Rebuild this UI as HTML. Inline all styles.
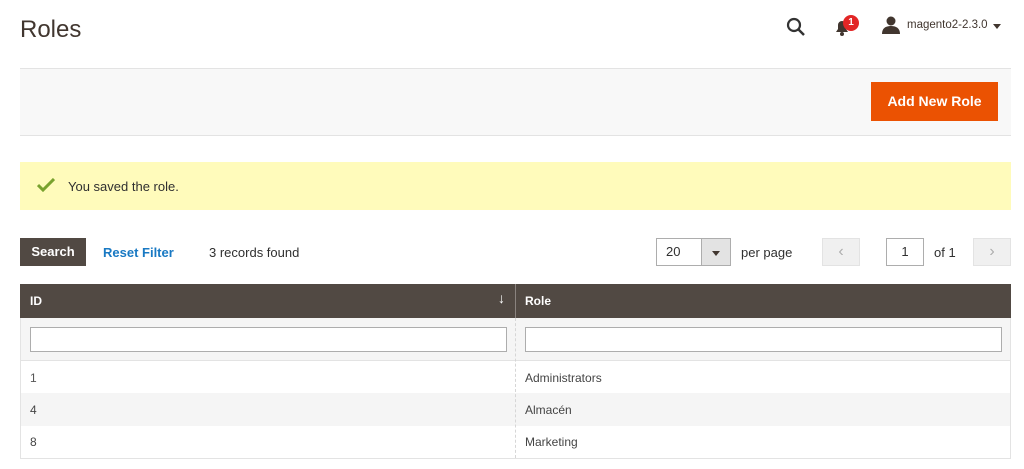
<!DOCTYPE html><html><head><style>
*{margin:0;padding:0;box-sizing:border-box}
body{width:1024px;height:469px;background:#fff;font-family:"Liberation Sans",sans-serif;color:#303030;position:relative;overflow:hidden}
.a{position:absolute}
</style></head><body>
<div class="a" style="left:20px;top:16px;font-size:24px;color:#41362f">Roles</div>
<svg class="a" style="left:786px;top:17px" width="20" height="20" viewBox="0 0 20 20"><circle cx="8" cy="8" r="6" fill="none" stroke="#333" stroke-width="2.2"/><path d="M12.5 12.5L18 18" stroke="#333" stroke-width="2.5"/></svg>
<svg class="a" style="left:834px;top:18px" width="16" height="18" viewBox="0 0 16 18"><path d="M2 14h12l-2-3V7a4 4 0 0 0-8 0v4z" fill="#41362f"/><circle cx="8" cy="16" r="2" fill="#41362f"/></svg>
<div class="a" style="left:843px;top:15px;width:16px;height:16px;border-radius:8px;background:#e22626;color:#fff;font-size:10px;font-weight:bold;text-align:center;line-height:16px">1</div>
<svg class="a" style="left:882px;top:16px" width="18" height="18" viewBox="0 0 18 18"><circle cx="9" cy="5" r="4.5" fill="#41362f"/><path d="M0 18c0-6 4-8 9-8s9 2 9 8z" fill="#41362f"/></svg>
<div class="a" style="left:907px;top:19px;font-size:11.5px;color:#41362f">magento2-2.3.0</div>
<div class="a" style="left:993px;top:24px;border:4px solid transparent;border-top:5px solid #41362f;border-bottom:0"></div>
<div class="a" style="left:20px;top:68px;width:991px;height:68px;background:#f8f8f8;border-top:1px solid #e3e3e3;border-bottom:1px solid #e3e3e3"></div>
<div class="a" style="left:871px;top:82px;width:127px;height:39px;background:#eb5202;color:#fff;font-weight:bold;font-size:14px;text-align:center;line-height:39px">Add New Role</div>
<div class="a" style="left:20px;top:162px;width:991px;height:48px;background:#fffbbb"></div>
<svg class="a" style="left:37px;top:178px" width="18" height="14" viewBox="0 0 18 14"><path d="M1 7l5 5L17 1" fill="none" stroke="#79a22e" stroke-width="3"/></svg>
<div class="a" style="left:68px;top:179px;font-size:13px;color:#303030">You saved the role.</div>
<div class="a" style="left:20px;top:238px;width:66px;height:28px;background:#514943;color:#fff;font-weight:bold;font-size:13px;text-align:center;line-height:28px">Search</div>
<div class="a" style="left:103px;top:245px;font-size:13px;font-weight:bold;color:#1979c3">Reset Filter</div>
<div class="a" style="left:209px;top:245px;font-size:13px">3 records found</div>
<div class="a" style="left:656px;top:238px;width:75px;height:28px;border:1px solid #adadad;font-size:13px;line-height:26px;padding-left:9px">20</div>
<div class="a" style="left:701px;top:238px;width:30px;height:28px;background:#e3e3e3;border:1px solid #adadad"></div>
<div class="a" style="left:712px;top:251px;border:4px solid transparent;border-top:5px solid #41362f;border-bottom:0"></div>
<div class="a" style="left:741px;top:245px;font-size:13px">per page</div>
<div class="a" style="left:822px;top:238px;width:38px;height:28px;background:#f0f0f0;border:1px solid #e3e3e3;color:#adadad;text-align:center;line-height:26px;font-size:16px">&lsaquo;</div>
<div class="a" style="left:886px;top:238px;width:38px;height:28px;border:1px solid #adadad;text-align:center;line-height:26px;font-size:13px">1</div>
<div class="a" style="left:934px;top:245px;font-size:13px">of 1</div>
<div class="a" style="left:973px;top:238px;width:38px;height:28px;background:#f0f0f0;border:1px solid #e3e3e3;color:#adadad;text-align:center;line-height:26px;font-size:16px">&rsaquo;</div>
<div class="a" style="left:20px;top:284px;width:991px;height:34px;background:#514943;color:#fff;font-weight:bold;font-size:12px"><span class="a" style="left:10px;top:10px">ID</span><span class="a" style="left:478px;top:6px;font-size:14px;font-weight:normal">&darr;</span><span class="a" style="left:505px;top:10px">Role</span><div class="a" style="left:495px;top:0;width:1px;height:34px;background:#8a837f"></div></div>
<div class="a" style="left:20px;top:318px;width:991px;height:43px;background:#f5f5f5;border-left:1px solid #e3e3e3;border-right:1px solid #e3e3e3;border-bottom:1px solid #e3e3e3"></div>
<div class="a" style="left:30px;top:327px;width:477px;height:25px;background:#fff;border:1px solid #adadad"></div>
<div class="a" style="left:525px;top:327px;width:477px;height:25px;background:#fff;border:1px solid #adadad"></div>
<div class="a" style="left:20px;top:361px;width:991px;height:98px;border-left:1px solid #e3e3e3;border-right:1px solid #e3e3e3;border-bottom:1px solid #e3e3e3"></div>
<div class="a" style="left:21px;top:393px;width:989px;height:33px;background:#f5f5f5"></div>
<div class="a" style="left:515px;top:318px;height:140px;border-left:1px dashed #d6d6d6"></div>
<div class="a" style="left:30px;top:371px;font-size:12px;color:#555">1</div>
<div class="a" style="left:525px;top:371px;font-size:12px;color:#444">Administrators</div>
<div class="a" style="left:30px;top:403px;font-size:12px;color:#444">4</div>
<div class="a" style="left:525px;top:403px;font-size:12px;color:#444">Almacén</div>
<div class="a" style="left:30px;top:435px;font-size:12px;color:#444">8</div>
<div class="a" style="left:525px;top:435px;font-size:12px;color:#444">Marketing</div>
</body></html>
